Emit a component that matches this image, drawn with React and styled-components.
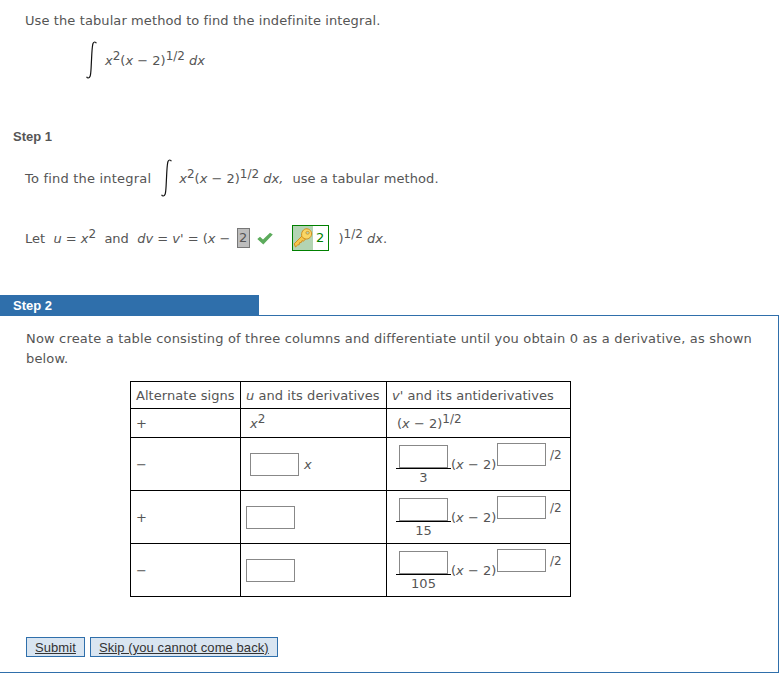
import React from "react";
import styled, { createGlobalStyle } from "styled-components";

const Global = createGlobalStyle`
  html, body { margin: 0; padding: 0; background: #fff; }
  body { font-family: "DejaVu Sans", Verdana, sans-serif; font-size: 13px; color: #555; }
`;
const Page = styled.div`
  width: 780px;
  height: 674px;
  overflow: hidden;
  display: flex;
  flex-direction: column;
`;
const Intro = styled.section`
  padding: 12px 0 0 25px;
  height: 116px;
  box-sizing: border-box;
`;
const Text = styled.p`
  margin: 0;
  line-height: 17px;
  letter-spacing: 0.1px;
`;
const Formula = styled.div`
  display: flex;
  align-items: center;
  height: 40px;
  margin: 11px 0 0 ${(p) => p.$indent}px;
`;
const IntegralSvg = styled.svg`
  flex: none;
  margin-right: ${(p) => p.$mr}px;
  margin-left: ${(p) => p.$ml || 0}px;
`;
const I = styled.i`
  font-style: italic;
`;
const Sup = styled.sup`
  font-size: 12px;
  line-height: 0;
  vertical-align: 5px;
`;
const StepTitle = styled.h2`
  margin: 0;
  padding-left: 13px;
  height: 21px;
  font: bold 13px/17px "Liberation Sans", Arial, sans-serif;
  color: #555;
`;
const StepOne = styled.section`
  height: 179px;
  box-sizing: border-box;
  padding-top: 12px;
`;
const Row = styled.div`
  display: flex;
  align-items: center;
  padding-left: 25px;
  height: ${(p) => p.$h}px;
  margin-top: ${(p) => p.$mt || 0}px;
  letter-spacing: 0.1px;
  white-space: pre;
`;
const Lead1 = styled.span`
  letter-spacing: 0.2px;
`;
const Gap = styled.span`
  margin-left: ${(p) => p.$l}px;
`;
const Math = styled.span`
  letter-spacing: 0;
`;
const Given = styled.span`
  display: inline-block;
  box-sizing: border-box;
  width: 13px;
  height: 20px;
  margin-left: 6px;
  background: #bdbdbd;
  border: 1px solid #777;
  text-align: center;
  line-height: 18px;
  letter-spacing: 0;
`;
const CheckIcon = styled.svg`
  margin-left: 7px;
  margin-right: 19px;
  flex: none;
`;
const Answer = styled.span`
  display: inline-flex;
  box-sizing: border-box;
  width: 37px;
  height: 26px;
  border: 1px solid #008000;
  margin-right: 10px;
`;
const KeyCell = styled.span`
  width: 20px;
  background: #b3d4b3;
  display: flex;
  align-items: center;
  justify-content: center;
`;
const AnswerText = styled.span`
  flex: 1;
  text-align: center;
  color: #008000;
  line-height: 24px;
  letter-spacing: 0;
`;
const StepTwo = styled.section`
  flex: 1;
`;
const Tab = styled.h2`
  margin: 0;
  width: 259px;
  height: 21px;
  box-sizing: border-box;
  padding-left: 13px;
  background: #2f6fab;
  color: #fff;
  font: bold 13px/21px "Liberation Sans", Arial, sans-serif;
`;
const Panel = styled.div`
  box-sizing: border-box;
  margin-top: -1px;
  width: 779px;
  height: 358px;
  border-top: 1px solid #2f6fab;
  border-right: 1px solid #2f6fab;
  border-bottom: 1px solid #2f6fab;
  padding: 13px 26px 0;
`;
const Lead = styled.p`
  margin: 0;
  line-height: 20px;
  letter-spacing: 0.17px;
  width: 730px;
`;
const Table = styled.table`
  border-collapse: collapse;
  table-layout: fixed;
  width: 440px;
  margin: 12px 0 0 104px;
  letter-spacing: 0.05px;
  td, th {
    border: 1px solid #000;
    padding: 0 0 0 5px;
    font-weight: normal;
    text-align: left;
    white-space: nowrap;
    box-sizing: border-box;
  }
`;
const Tr = styled.tr`
  height: ${(p) => p.$h}px;
`;
const Box = styled.span`
  display: block;
  box-sizing: border-box;
  width: 49px;
  height: 23px;
  border: 1px solid #888;
  background: #fff;
  flex: none;
`;
const UCell = styled.div`
  display: flex;
  align-items: center;
  gap: 5px;
  padding-left: ${(p) => p.$pl}px;
`;
const Plain = styled.div`
  padding-left: 5px;
  letter-spacing: 0;
`;
const Antideriv = styled.div`
  display: flex;
  align-items: flex-start;
  box-sizing: border-box;
  height: 52px;
  padding: 7px 0 0 4px;
`;
const Fraction = styled.div`
  display: flex;
  flex-direction: column;
  align-items: center;
  width: 55px;
`;
const Numer = styled.div`
  height: 23px;
  width: 100%;
  display: flex;
  justify-content: center;
  border-bottom: 1px solid #000;
`;
const Denom = styled.div`
  line-height: 18px;
`;
const Base = styled.span`
  margin-top: 11px;
  line-height: 17px;
  width: 46px;
  letter-spacing: 0;
`;
const Exponent = styled.div`
  margin-top: -2px;
`;
const Over = styled.span`
  font-size: 12px;
  margin: 3px 0 0 4px;
  line-height: 14px;
`;
const Actions = styled.div`
  display: flex;
  gap: 5px;
  margin-top: 40px;
`;
const Btn = styled.button`
  box-sizing: border-box;
  height: 20px;
  padding: 1px 8px 0;
  background: #d9e5f1;
  border: 1px solid #2f6fab;
  color: #333;
  font: 13px/18px "Liberation Sans", Arial, sans-serif;
  text-decoration: underline;
  letter-spacing: 0.08px;
`;

const Key = () => (
  <svg width="20" height="22" viewBox="0 0 20 22">
    <path d="M2.5 20 L1.2 16.8 L9 9 L12.5 12.2 L10.2 14.2 L9 13.6 L8.2 15.6 L6.6 15.6 L6.2 17.6 L4.6 18 Z" fill="#f6c64c" stroke="#d08e1e" strokeWidth="1" />
    <path d="M9 9.8 C7.4 5.4 10.6 1.4 14 1.8 C18 2.2 19.8 6.4 17.8 9.6 C15.6 12.8 11.4 12.8 9 9.8 Z" fill="#f9d766" stroke="#d08e1e" strokeWidth="1" />
    <ellipse cx="14.6" cy="5.8" rx="1.7" ry="1.4" fill="#b3d4b3" stroke="#d08e1e" strokeWidth="0.8" />
  </svg>
);
const Check = () => (
  <CheckIcon width="16" height="13" viewBox="0 0 16 13">
    <path d="M0.3 7 L3 4.8 L6 7.5 L13 0.8 L15.8 2.4 L6.3 12.6 Z" fill="#5cab5c" />
  </CheckIcon>
);
const Sign = ({ mr, ml }) => (
  <IntegralSvg $mr={mr} $ml={ml} width="11" height="38" viewBox="0 0 11 38">
    <path d="M10.4 2.2 C9.6 0.6 7.9 0.6 7.1 2.2 C6.3 4 6.1 8 5.8 13 L5.1 27 C4.9 31 4.7 34 4 35.6 C3.2 37.4 1.4 37.4 0.6 35.8" fill="none" stroke="#111" strokeWidth="1.2" />
  </IntegralSvg>
);
const Expr = ({ comma }) => (
  <Math>
    <I>x</I><Sup>2</Sup>(<I>x</I> − 2)<Sup>1/2</Sup> <I>dx{comma ? "," : ""}</I>
  </Math>
);
const Anti = ({ d }) => (
  <Antideriv>
    <Fraction>
      <Numer><Box /></Numer>
      <Denom>{d}</Denom>
    </Fraction>
    <Base>(<I>x</I> − 2)</Base>
    <Exponent><Box /></Exponent>
    <Over>/2</Over>
  </Antideriv>
);

export default function App() {
  return (
    <Page>
      <Global />
      <Intro>
        <Text>Use the tabular method to find the indefinite integral.</Text>
        <Formula $indent={61}>
          <Sign mr={8} />
          <Expr />
        </Formula>
      </Intro>
      <StepOne>
        <StepTitle>Step 1</StepTitle>
        <Row $h={40} $mt={9}>
          <Lead1>To find the integral</Lead1>
          <Sign ml={10} mr={7} />
          <Expr comma />
          <Gap $l={9}>use a tabular method.</Gap>
        </Row>
        <Row $h={26} $mt={27}>
          <Math>Let  <I>u</I> = <I>x</I><Sup>2</Sup>  and  <I>dv</I> = <I>v</I>' = (<I>x</I> −</Math>
          <Given>2</Given>
          <Check />
          <Answer><KeyCell><Key /></KeyCell><AnswerText>2</AnswerText></Answer>
          <Math>)<Sup>1/2</Sup> <I>dx</I>.</Math>
        </Row>
      </StepOne>
      <StepTwo>
        <Tab>Step 2</Tab>
        <Panel>
          <Lead>Now create a table consisting of three columns and differentiate until you obtain 0 as a derivative, as shown below.</Lead>
          <Table>
            <colgroup>
              <col style={{ width: 110 }} />
              <col style={{ width: 146 }} />
              <col style={{ width: 184 }} />
            </colgroup>
            <tbody>
              <Tr $h={27}>
                <th>Alternate signs</th>
                <th><I>u</I> and its derivatives</th>
                <th><I>v</I>' and its antiderivatives</th>
              </Tr>
              <Tr $h={29}>
                <td>+</td>
                <td><UCell $pl={4}><span><I>x</I><Sup>2</Sup></span></UCell></td>
                <td><Plain>(<I>x</I> − 2)<Sup>1/2</Sup></Plain></td>
              </Tr>
              <Tr $h={53}>
                <td>−</td>
                <td><UCell $pl={4}><Box /><I>x</I></UCell></td>
                <td><Anti d="3" /></td>
              </Tr>
              <Tr $h={53}>
                <td>+</td>
                <td><UCell $pl={0}><Box /></UCell></td>
                <td><Anti d="15" /></td>
              </Tr>
              <Tr $h={53}>
                <td>−</td>
                <td><UCell $pl={0}><Box /></UCell></td>
                <td><Anti d="105" /></td>
              </Tr>
            </tbody>
          </Table>
          <Actions>
            <Btn>Submit</Btn>
            <Btn>Skip (you cannot come back)</Btn>
          </Actions>
        </Panel>
      </StepTwo>
    </Page>
  );
}
